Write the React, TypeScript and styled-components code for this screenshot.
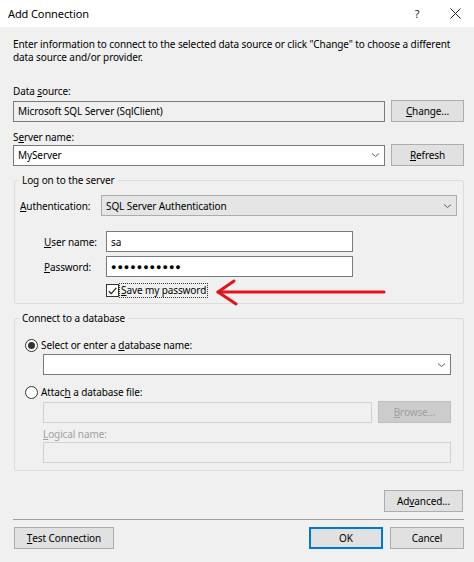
import styled, { createGlobalStyle } from 'styled-components'

const GlobalStyle = createGlobalStyle`
  html, body {
    margin: 0;
    padding: 0;
    background: #f0f0f0;
  }
  body {
    font-family: 'Noto Sans', 'Open Sans', sans-serif;
    font-size: 10px;
    letter-spacing: -0.1px;
    color: #000;
  }
`

const Window = styled('div')`
  width: 474px;
  height: 562px;
  display: flex;
  flex-direction: column;
  background: #f0f0f0;
  overflow: hidden;
`

const TitleBar = styled('div')`
  height: 27px;
  flex: none;
  display: flex;
  align-items: center;
  background: #fff;
  padding-left: 8px;
  font-size: 11px;
`

const TitleText = styled('span')`
  flex: 1;
`

const TitleButton = styled('div')`
  width: 38px;
  height: 27px;
  display: flex;
  align-items: center;
  justify-content: center;
  font-size: 11px;
  color: #222;
`

const Body = styled('div')`
  flex: 1;
  display: flex;
  flex-direction: column;
  padding: 11px 10px 0 13px;
`

const Description = styled('p')`
  margin: 0;
  line-height: 13px;
`

const Label = styled('div')<{ $top?: number; $disabled?: boolean }>`
  line-height: 14px;
  margin-top: ${p => p.$top ?? 0}px;
  color: ${p => (p.$disabled ? '#a0a0a0' : '#000')};
  white-space: nowrap;
`

const Key = styled('span')`
  text-decoration: underline;
  text-underline-offset: 1px;
`

const Row = styled('div')<{ $top?: number; $indent?: number }>`
  display: flex;
  align-items: center;
  gap: 6px;
  margin-top: ${p => p.$top ?? 0}px;
  padding-left: ${p => p.$indent ?? 0}px;
`

const Field = styled('div')<{ $width?: number; $variant?: 'readonly' | 'edit' | 'disabled' | 'combo' }>`
  box-sizing: border-box;
  height: 21px;
  ${p => (p.$width ? `width: ${p.$width}px; flex: none;` : 'flex: 1;')}
  display: flex;
  align-items: center;
  padding: 0 4px;
  border: 1px solid
    ${p => (p.$variant === 'disabled' ? '#d2d2d2' : p.$variant === 'combo' ? '#acacac' : '#7a7a7a')};
  background: ${p =>
    p.$variant === 'readonly' || p.$variant === 'disabled' ? '#f0f0f0' : p.$variant === 'combo' ? '#e5e5e5' : '#fff'};
  white-space: nowrap;
`

const FieldText = styled('span')<{ $dots?: boolean }>`
  flex: 1;
  letter-spacing: ${p => (p.$dots ? '1px' : 'inherit')};
  font-size: ${p => (p.$dots ? '9px' : 'inherit')};
`

const Chevron = () => (
  <svg width="9" height="6" viewBox="0 0 9 6">
    <path d="M1 1.5 L4.5 4.5 L8 1.5" fill="none" stroke="#606060" strokeWidth="1" />
  </svg>
)

const Button = styled('div')<{ $width: number; $disabled?: boolean; $default?: boolean }>`
  box-sizing: border-box;
  width: ${p => p.$width}px;
  flex: none;
  height: 22px;
  display: flex;
  align-items: center;
  justify-content: center;
  background: ${p => (p.$disabled ? '#cccccc' : '#e1e1e1')};
  border: ${p => (p.$default ? '2px solid #0078d7' : `1px solid ${p.$disabled ? '#bfbfbf' : '#adadad'}`)};
  color: ${p => (p.$disabled ? '#a0a0a0' : '#000')};
  white-space: nowrap;
`

const Group = styled('fieldset')<{ $top: number; $pb: number; $pr: number }>`
  margin: ${p => p.$top}px 0 0 1px;
  padding: 0 ${p => p.$pr}px ${p => p.$pb}px 5px;
  border: 1px solid #dcdcdc;
  border-radius: 2px;
  min-width: 0;
`

const Legend = styled('legend')`
  padding: 0 3px;
  margin-left: -1px;
  line-height: 14px;
`

const FieldLabel = styled('span')<{ $width: number }>`
  width: ${p => p.$width}px;
  flex: none;
  white-space: nowrap;
`

const CheckRow = styled('div')`
  display: flex;
  align-items: center;
  margin-top: 6px;
  padding-left: 86px;
  height: 15px;
`

const CheckBox = styled('span')`
  box-sizing: border-box;
  width: 13px;
  height: 13px;
  border: 1px solid #333;
  background: #fff;
  display: flex;
  align-items: center;
  justify-content: center;
`

const FocusText = styled('span')`
  margin-left: 1px;
  padding: 0 1px;
  line-height: 13px;
  outline: 1px dotted #333;
`

const Arrow = styled('svg')`
  flex: none;
  margin: -8px 0 -12px 8px;
`

const RadioRow = styled('div')<{ $top: number }>`
  display: flex;
  align-items: center;
  gap: 3px;
  margin-top: ${p => p.$top}px;
  padding-left: 5px;
  line-height: 14px;
`

const Radio = styled('span')<{ $checked?: boolean }>`
  box-sizing: border-box;
  width: 13px;
  height: 13px;
  border-radius: 50%;
  border: 1px solid #333;
  background: #fff;
  display: flex;
  align-items: center;
  justify-content: center;
  &::after {
    content: '';
    width: 7px;
    height: 7px;
    border-radius: 50%;
    background: ${p => (p.$checked ? '#333' : 'transparent')};
  }
`

const Indent = styled('div')`
  padding-left: 23px;
  display: flex;
  flex-direction: column;
`

const Spacer = styled('div')`
  flex: 1;
`

const Actions = styled('div')`
  display: flex;
  justify-content: flex-end;
  margin-right: 1px;
`

const Separator = styled('div')`
  height: 1px;
  background: #a0a0a0;
  margin: 7px 0 7px 0;
`

const Footer = styled('div')`
  display: flex;
  align-items: center;
  gap: 7px;
  padding-left: 1px;
  margin-bottom: 13px;
`

const CloseIcon = () => (
  <svg width="11" height="11" viewBox="0 0 11 11">
    <path d="M0.5 0.5 L10.5 10.5 M10.5 0.5 L0.5 10.5" stroke="#222" strokeWidth="1" />
  </svg>
)

const App: React.FC = () => {
  return (
    <Window>
      <GlobalStyle />
      <TitleBar>
        <TitleText>Add Connection</TitleText>
        <TitleButton>?</TitleButton>
        <TitleButton>
          <CloseIcon />
        </TitleButton>
      </TitleBar>
      <Body>
        <Description>
          Enter information to connect to the selected data source or click "Change" to choose a different
          <br />
          data source and/or provider.
        </Description>

        <Label $top={20}>
          Data <Key>s</Key>ource:
        </Label>
        <Row $top={2}>
          <Field $variant="readonly">
            <FieldText>Microsoft SQL Server (SqlClient)</FieldText>
          </Field>
          <Button $width={73}>
            <Key>C</Key>hange...
          </Button>
        </Row>

        <Label $top={8}>
          S<Key>e</Key>rver name:
        </Label>
        <Row $top={0}>
          <Field $variant="edit">
            <FieldText>MyServer</FieldText>
            <Chevron />
          </Field>
          <Button $width={73}>
            <Key>R</Key>efresh
          </Button>
        </Row>

        <Group $top={7} $pb={5} $pr={6}>
          <Legend>Log on to the server</Legend>
          <Row $top={8} $indent={0}>
            <FieldLabel $width={75}>
              <Key>A</Key>uthentication:
            </FieldLabel>
            <Field $variant="combo">
              <FieldText>SQL Server Authentication</FieldText>
              <Chevron />
            </Field>
          </Row>
          <Row $top={15} $indent={24}>
            <FieldLabel $width={56}>
              <Key>U</Key>ser name:
            </FieldLabel>
            <Field $variant="edit" $width={247}>
              <FieldText>sa</FieldText>
            </Field>
          </Row>
          <Row $top={4} $indent={24}>
            <FieldLabel $width={56}>
              <Key>P</Key>assword:
            </FieldLabel>
            <Field $variant="edit" $width={247}>
              <FieldText $dots>●●●●●●●●●●●</FieldText>
            </Field>
          </Row>
          <CheckRow>
            <CheckBox>
              <svg width="9" height="8" viewBox="0 0 9 8">
                <path d="M0.8 4.2 L3.3 6.6 L8.3 0.8" fill="none" stroke="#222" strokeWidth="1.2" />
              </svg>
            </CheckBox>
            <FocusText>
              <Key>S</Key>ave my password
            </FocusText>
            <Arrow width="172" height="28" viewBox="0 0 172 28">
              <path d="M3 13 L169 13" stroke="#e3131b" strokeWidth="3" strokeLinecap="round" />
              <path d="M19 2 L3 13 L21 25" fill="none" stroke="#e3131b" strokeWidth="3" strokeLinecap="round" strokeLinejoin="round" />
            </Arrow>
          </CheckRow>
        </Group>

        <Group $top={7} $pb={7} $pr={12}>
          <Legend>Connect to a database</Legend>
          <RadioRow $top={13}>
            <Radio $checked />
            <span>
              Select or enter a <Key>d</Key>atabase name:
            </span>
          </RadioRow>
          <Indent>
            <Row $top={2}>
              <Field $variant="edit">
                <FieldText />
                <Chevron />
              </Field>
            </Row>
          </Indent>
          <RadioRow $top={10}>
            <Radio />
            <span>
              Attac<Key>h</Key> a database file:
            </span>
          </RadioRow>
          <Indent>
            <Row $top={2}>
              <Field $variant="disabled" />
              <Button $width={73} $disabled>
                <Key>B</Key>rowse...
              </Button>
            </Row>
            <Label $top={4} $disabled>
              <Key>L</Key>ogical name:
            </Label>
            <Row $top={1}>
              <Field $variant="disabled" />
            </Row>
          </Indent>
        </Group>

        <Spacer />
        <Actions>
          <Button $width={79}>
            Ad<Key>v</Key>anced...
          </Button>
        </Actions>
        <Separator />
        <Footer>
          <Button $width={100}>
            <Key>T</Key>est Connection
          </Button>
          <Spacer />
          <Button $width={74} $default>
            OK
          </Button>
          <Button $width={74}>Cancel</Button>
        </Footer>
      </Body>
    </Window>
  )
}

export default App
